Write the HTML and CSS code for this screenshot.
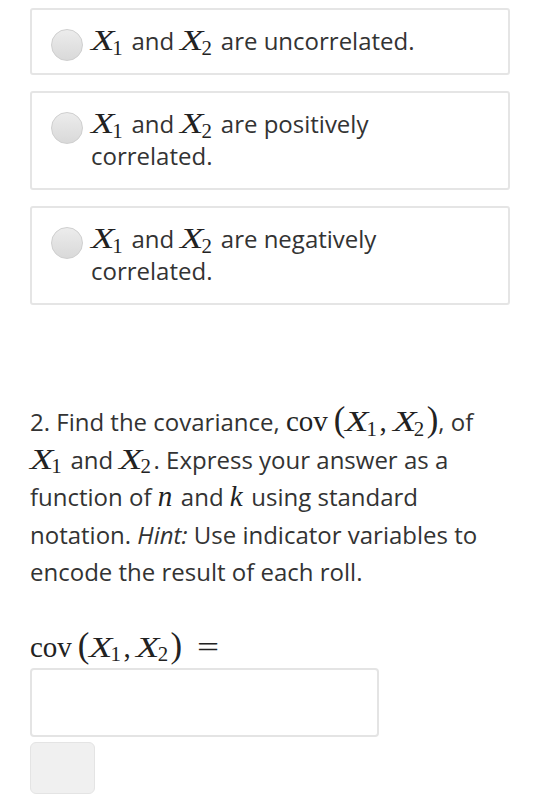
FILE: index.html
```html
<!DOCTYPE html>
<html>
<head>
<meta charset="utf-8">
<link rel="stylesheet" href="styles.css">
</head>
<body>
<div class="page">
  <div class="options">
    <div class="option">
      <span class="radio"></span>
      <span class="label"><span class="m"><i class="x">X</i><sub>1</sub></span> and <span class="m"><i class="x">X</i><sub>2</sub></span> are uncorrelated.</span>
    </div>
    <div class="option">
      <span class="radio"></span>
      <span class="label"><span class="m"><i class="x">X</i><sub>1</sub></span> and <span class="m"><i class="x">X</i><sub>2</sub></span> are positively correlated.</span>
    </div>
    <div class="option">
      <span class="radio"></span>
      <span class="label"><span class="m"><i class="x">X</i><sub>1</sub></span> and <span class="m"><i class="x">X</i><sub>2</sub></span> are negatively correlated.</span>
    </div>
  </div>

  <p class="question">2. Find the covariance, <span class="m"><span class="rm">cov</span>&thinsp;<span class="paren">(</span><i class="x">X</i><sub>1</sub>,&thinsp;<i class="x">X</i><sub>2</sub><span class="paren">)</span></span>, of <span class="m"><i class="x">X</i><sub>1</sub></span> and <span class="m"><i class="x">X</i><sub>2</sub></span>. Express your answer as a function of <span class="m"><i class="v">n</i></span> and <span class="m"><i class="v">k</i></span> using standard notation. <em>Hint:</em> Use indicator variables to encode the result of each roll.</p>

  <div class="answer">
    <div class="eq"><span class="rm">cov</span>&thinsp;<span class="paren">(</span><i class="x">X</i><sub>1</sub>,&thinsp;<i class="x">X</i><sub>2</sub><span class="paren">)</span><span class="eqs">=</span></div>
    <div class="input"></div>
    <div class="btn"></div>
  </div>
</div>
</body>
</html>
```

FILE: styles.css
```css
html, body {
  margin: 0;
  padding: 0;
  background: #ffffff;
}

body {
  font-family: "Open Sans", "Noto Sans", sans-serif;
  font-size: 24px;
  color: #333333;
}

.page {
  padding: 8px 30px 0 30px;
}

.options {
  display: flex;
  flex-direction: column;
  gap: 16px;
}

.option {
  display: flex;
  align-items: flex-start;
  gap: 8px;
  border: 2px solid #e5e5e5;
  border-radius: 3px;
  padding: 15px 40px 16px 19px;
  line-height: 32px;
}

.radio {
  flex: none;
  width: 30px;
  height: 30px;
  margin: 4px 0 -4px 0;
  border-radius: 50%;
  border: 1px solid #cfcfcf;
  background: linear-gradient(#ececec, #d9d9d9);
}

.label {
  flex: 1;
}

.m {
  font-family: "Liberation Serif", "DejaVu Serif", serif;
  font-size: 1.21em;
  line-height: 0;
  white-space: nowrap;
  color: #222222;
}

.m i,
.eq i {
  font-style: italic;
}

i.x {
  display: inline-block;
  transform: scaleX(1.32);
  transform-origin: left center;
  margin-right: 0.12em;
}

i.v {
  letter-spacing: 0.08em;
}

.m sub,
.eq sub {
  font-size: 0.72em;
  vertical-align: -0.22em;
  line-height: 0;
  margin-right: 0.12em;
}

.rm {
  font-style: normal;
}

.paren {
  font-size: 1.2em;
}

.question {
  margin: 98px 0 0 0;
  line-height: 37.5px;
}

.question em {
  font-style: italic;
}

.answer {
  margin-top: 35px;
  display: flex;
  flex-direction: column;
  align-items: flex-start;
}

.eq {
  font-family: "Liberation Serif", "DejaVu Serif", serif;
  font-size: 29px;
  line-height: 40px;
  color: #222222;
}

.eqs {
  display: inline-block;
  margin-left: 15px;
  transform: scaleX(1.35);
  transform-origin: left center;
}

.input {
  margin-top: 1px;
  width: 345px;
  height: 65px;
  border: 2px solid #e4e4e4;
  border-radius: 4px;
  background: #ffffff;
}

.btn {
  margin-top: 5px;
  width: 63px;
  height: 50px;
  border: 1px solid #e4e4e4;
  border-radius: 6px;
  background: #f0f0f0;
}
```
